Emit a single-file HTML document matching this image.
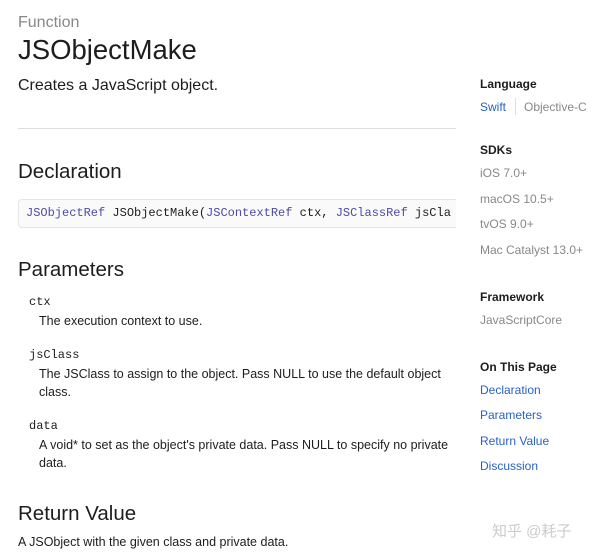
<!DOCTYPE html>
<html><head><meta charset="utf-8"><style>
body{margin:0;width:600px;height:555px;background:#fff;position:relative;overflow:hidden;font-family:"Liberation Sans",sans-serif;color:#1d1d1f}
.a{position:absolute;white-space:nowrap}
.m{font-family:"Liberation Mono",monospace}
.h2{font-size:20.5px}
.p{font-size:12.5px}
.s{font-size:12px;color:#888}
.b{font-size:12px;font-weight:bold}
.l{font-size:12px;color:#2962c9}
.k{color:#4e4aa8}
</style></head><body>
<div class="a" style="left:18px;top:14px;font-size:16px;color:#888">Function</div>
<div class="a" style="left:18px;top:34px;font-size:27.5px">JSObjectMake</div>
<div class="a" style="left:18px;top:77px;font-size:16px">Creates a JavaScript object.</div>
<div class="a" style="left:18px;top:128px;width:438px;border-top:1px solid #ddd"></div>
<div class="a h2" style="left:18px;top:160px">Declaration</div>
<div class="a" style="left:18px;top:199px;width:450px;height:27px;border:1px solid #e5e5e5;border-radius:4px;background:#fafafa;overflow:hidden"></div>
<div class="a m" style="left:26px;top:206px;font-size:12px;width:430px;overflow:hidden"><span class="k">JSObjectRef</span> JSObjectMake(<span class="k">JSContextRef</span> ctx, <span class="k">JSClassRef</span> jsCla</div>
<div class="a" style="left:456px;top:195px;width:144px;height:35px;background:#fff"></div>
<div class="a h2" style="left:18px;top:258px">Parameters</div>
<div class="a m" style="left:29px;top:295px;font-size:12px">ctx</div>
<div class="a p" style="left:39px;top:314px">The execution context to use.</div>
<div class="a m" style="left:29px;top:348px;font-size:12px">jsClass</div>
<div class="a p" style="left:39px;top:367px">The JSClass to assign to the object. Pass NULL to use the default object</div>
<div class="a p" style="left:39px;top:385px">class.</div>
<div class="a m" style="left:29px;top:419px;font-size:12px">data</div>
<div class="a p" style="left:39px;top:438px">A void* to set as the object's private data. Pass NULL to specify no private</div>
<div class="a p" style="left:39px;top:456px">data.</div>
<div class="a h2" style="left:18px;top:502px">Return Value</div>
<div class="a p" style="left:18px;top:535px">A JSObject with the given class and private data.</div>

<div class="a b" style="left:480px;top:77px">Language</div>
<div class="a l" style="left:480px;top:100px">Swift</div>
<div class="a" style="left:515px;top:98px;height:17px;border-left:1px solid #ddd"></div>
<div class="a s" style="left:524px;top:100px">Objective-C</div>
<div class="a b" style="left:480px;top:143px">SDKs</div>
<div class="a s" style="left:480px;top:166px">iOS 7.0+</div>
<div class="a s" style="left:480px;top:192px">macOS 10.5+</div>
<div class="a s" style="left:480px;top:217px">tvOS 9.0+</div>
<div class="a s" style="left:480px;top:243px">Mac Catalyst 13.0+</div>
<div class="a b" style="left:480px;top:290px">Framework</div>
<div class="a s" style="left:480px;top:313px">JavaScriptCore</div>
<div class="a b" style="left:480px;top:360px">On This Page</div>
<div class="a l" style="left:480px;top:383px">Declaration</div>
<div class="a l" style="left:480px;top:408px">Parameters</div>
<div class="a l" style="left:480px;top:434px">Return Value</div>
<div class="a l" style="left:480px;top:459px">Discussion</div>
<div class="a" style="left:492px;top:520px;font-size:15px;color:#ccc;font-family:'Liberation Sans','Noto Sans CJK SC',sans-serif">知乎 @耗子</div>
</body></html>
